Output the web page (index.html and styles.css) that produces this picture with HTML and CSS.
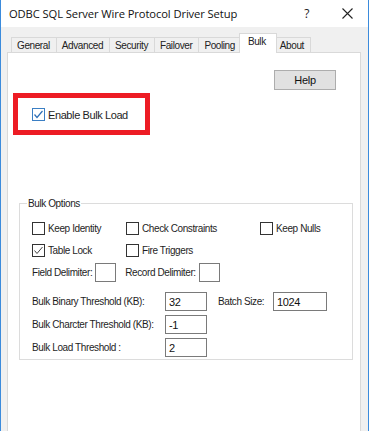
FILE: index.html
```html
<!DOCTYPE html>
<html lang="en">
<head>
    <meta charset="UTF-8">
    <title>ODBC SQL Server Wire Protocol Driver Setup</title>
    <link rel="stylesheet" href="styles.css">
</head>
<body>
    <div class="window">
        <div class="titlebar">
            <span class="title">ODBC SQL Server Wire Protocol Driver Setup</span>
            <span class="help-q">?</span>
            <svg class="close" width="11" height="11" viewBox="0 0 11 11">
                <path d="M0.5 0.5 L10.5 10.5 M10.5 0.5 L0.5 10.5" stroke="#222" stroke-width="1.1" fill="none"/>
            </svg>
        </div>

        <div class="tabs">
            <div class="tab">General</div>
            <div class="tab">Advanced</div>
            <div class="tab">Security</div>
            <div class="tab">Failover</div>
            <div class="tab">Pooling</div>
            <div class="tab active">Bulk</div>
            <div class="tab">About</div>
        </div>

        <div class="panel">
            <div class="help-row">
                <button class="btn">Help</button>
            </div>

            <div class="highlight">
                <label class="check">
                    <span class="box focus">
                        <svg width="11" height="11" viewBox="0 0 11 11"><polyline points="1.5,5.5 4,8.5 9.5,2" stroke="#2d6fb7" stroke-width="1.2" fill="none"/></svg>
                    </span>
                    Enable Bulk Load
                </label>
            </div>

            <fieldset class="group">
                <legend>Bulk Options</legend>

                <div class="check-grid">
                    <label class="check"><span class="box"></span>Keep Identity</label>
                    <label class="check"><span class="box"></span>Check Constraints</label>
                    <label class="check"><span class="box"></span>Keep Nulls</label>
                    <label class="check">
                        <span class="box">
                            <svg width="11" height="11" viewBox="0 0 11 11"><polyline points="1.5,5.5 4,8.5 9.5,2" stroke="#444" stroke-width="1" fill="none"/></svg>
                        </span>Table Lock</label>
                    <label class="check"><span class="box"></span>Fire Triggers</label>
                </div>

                <div class="delims">
                    <span>Field Delimiter:</span>
                    <span class="field small"></span>
                    <span class="gap-label">Record Delimiter:</span>
                    <span class="field small"></span>
                </div>

                <div class="thresholds">
                    <span>Bulk Binary Threshold (KB):</span>
                    <span class="field num">32</span>
                    <span class="batch-label">Batch Size:</span>
                    <span class="field batch">1024</span>

                    <span>Bulk Charcter Threshold (KB):</span>
                    <span class="field num">-1</span>
                    <span></span>
                    <span></span>

                    <span>Bulk Load Threshold :</span>
                    <span class="field num">2</span>
                </div>
            </fieldset>
        </div>
    </div>
</body>
</html>
```

FILE: styles.css
```css
html, body {
    margin: 0;
    padding: 0;
}
body {
    width: 369px;
    height: 431px;
    overflow: hidden;
    font-family: "Liberation Sans", Arial, sans-serif;
    font-size: 10px;
    letter-spacing: -0.4px;
    color: #1e1e1e;
    background: #fff;
}
.window {
    height: 431px;
    box-sizing: border-box;
    border-left: 1px solid #3b8bdc;
    border-right: 1px solid #3b8bdc;
    background-color: #f0f0f0;
    display: flex;
    flex-direction: column;
}
.titlebar {
    height: 27px;
    flex: none;
    background-color: #fff;
    display: flex;
    align-items: center;
    padding-left: 8px;
}
.title {
    font-family: "Open Sans", sans-serif;
    font-size: 11.2px;
    color: #111;
    letter-spacing: -0.1px;
}
.help-q {
    margin-left: auto;
    font-family: "Open Sans", sans-serif;
    font-size: 12px;
    color: #222;
}
.close {
    margin: 0 15px 0 33px;
}

/* tab strip */
.tabs {
    display: flex;
    align-items: flex-end;
    height: 18px;
    margin-top: 7px;
    padding-left: 10px;
    flex: none;
}
.tab {
    height: 14px;
    line-height: 15px;
    padding: 0 6px 0 5px;
    border: 1px solid #d9d9d9;
    border-bottom: none;
    border-right: none;
    background-color: #f0f0f0;
    color: #222;
}
.tab:last-child {
    border-right: 1px solid #d9d9d9;
}
.tab.active {
    height: 19px;
    line-height: 15px;
    margin: 0 -2px -1px -2px;
    padding: 0 10px 0 8px;
    background-color: #fff;
    border-right: 1px solid #d9d9d9;
    position: relative;
    z-index: 1;
}
.tab.active + .tab {
    border-left: none;
}

.panel {
    flex: 1;
    margin: 0 7px 0 6px;
    border: 1px solid #d9d9d9;
    border-bottom: none;
    background-color: #fff;
}
.help-row {
    display: flex;
    justify-content: flex-end;
    margin-top: 17px;
    padding-right: 24px;
}
.btn {
    width: 62px;
    height: 20px;
    padding: 0;
    font-family: inherit;
    font-size: 11px;
    letter-spacing: -0.3px;
    color: #111;
    background-color: #e1e1e1;
    border: 1px solid #adadad;
}

.highlight {
    width: 113px;
    height: 22px;
    margin: 3px 0 0 5px;
    border: 5px solid #ed1c24;
    padding: 10px 0 0 14px;
}

.check {
    display: flex;
    align-items: center;
    height: 13px;
    white-space: nowrap;
}
.box {
    width: 11px;
    height: 11px;
    border: 1px solid #333;
    background: #fff;
    margin-right: 3px;
    display: inline-flex;
    flex: none;
}
.box.focus {
    border-color: #3b7fc4;
}
.highlight .check {
    font-size: 11px;
}

.group {
    margin: 62px 0 0 11px;
    width: 334px;
    height: 163px;
    box-sizing: border-box;
    border: 1px solid #dcdcdc;
    padding: 12px 0 0 12px;
}
.group legend {
    padding: 0 1px;
    margin-left: -5px;
    line-height: 13px;
    color: #222;
}
.check-grid {
    display: grid;
    grid-template-columns: 94px 134px auto;
    row-gap: 9px;
}
.delims {
    display: flex;
    align-items: center;
    margin-top: 6px;
    white-space: nowrap;
}
.gap-label {
    margin-left: 9px;
}
.field {
    box-sizing: border-box;
    height: 19px;
    border: 1px solid #7a7a7a;
    background: #fff;
    display: inline-flex;
    align-items: center;
    padding-left: 3px;
    color: #111;
    font-size: 11px;
}
.field.small {
    width: 21px;
    margin-left: 3px;
}
.thresholds {
    display: grid;
    grid-template-columns: 133px 42px 66px 54px;
    row-gap: 4px;
    align-items: center;
    margin-top: 10px;
    white-space: nowrap;
}
.batch-label {
    padding-left: 11px;
}
.field.num {
    width: 42px;
}
.field.batch {
    width: 54px;
}
```
